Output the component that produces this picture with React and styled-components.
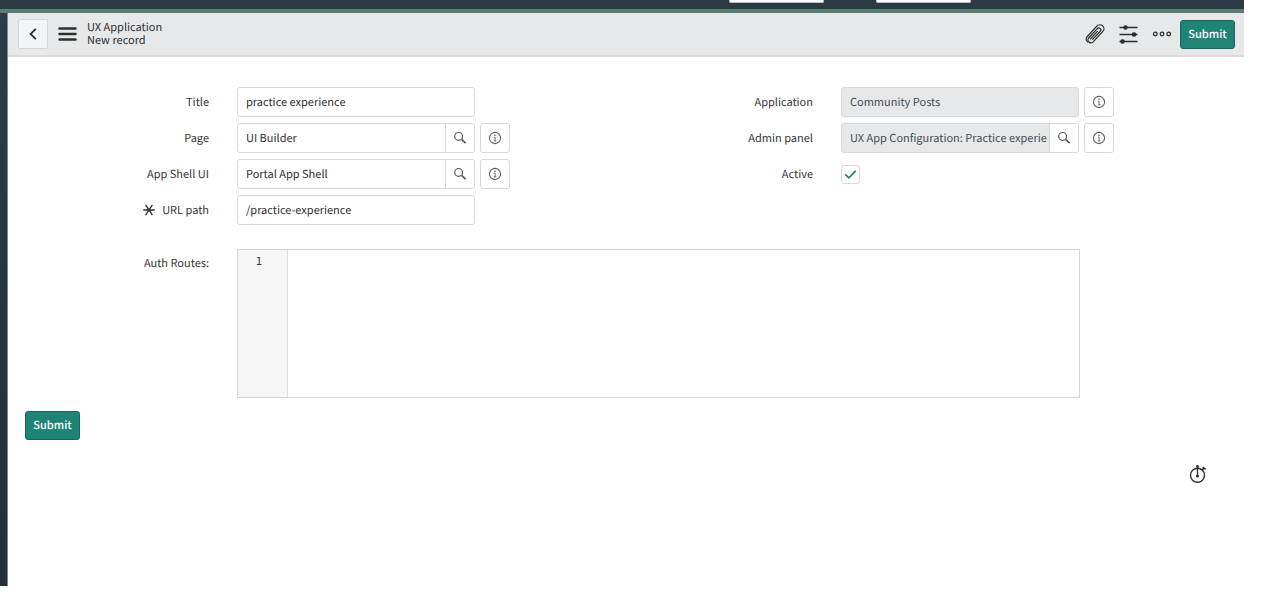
import React, { useState } from 'react';
import styled, { createGlobalStyle } from 'styled-components';

const GlobalStyle = createGlobalStyle`
  * {
    box-sizing: border-box;
  }
  body {
    margin: 0;
    background: #fff;
    color: #343434;
    text-rendering: geometricPrecision;
  }
  body, button, input, textarea {
    font-family: 'Noto Sans CJK SC', 'Noto Sans', sans-serif;
    font-size: 11px;
    line-height: 13px;
  }
  button, input, textarea {
    text-rendering: inherit;
  }
`;

const Page = styled.div`
  display: flex;
  flex-direction: column;
  min-height: 100vh;
  padding: 0 28px 28px 0;
`;

const TopBar = styled.div`
  display: flex;
  justify-content: flex-end;
  gap: 52px;
  height: 13px;
  padding-right: 273px;
  background: #2b3b43;
  border-bottom: 4px solid #5a7f70;
`;

const TopBox = styled.div`
  width: 95px;
  height: 3px;
  background: #fff;
  border: 1px solid #bcc5ca;
  border-top: none;
  border-radius: 0 0 2px 2px;
`;

const Body = styled.div`
  display: flex;
  flex: 1;
`;

const Rail = styled.div`
  width: 8px;
  background: linear-gradient(#2b3d46, #222f35);
  border-right: 1px solid #7d888c;
`;

const Main = styled.main`
  flex: 1;
  min-width: 0;
`;

const Header = styled.header`
  display: flex;
  align-items: center;
  height: 44px;
  padding: 0 9px 0 10px;
  background: #e6e8ea;
  border-bottom: 2px solid #d9dadb;
`;

const BackButton = styled.button`
  display: flex;
  align-items: center;
  justify-content: center;
  width: 30px;
  height: 30px;
  padding: 0;
  background: #f3f4f5;
  border: 1px solid #d3d6d9;
  border-radius: 2px;
`;

const IconButton = styled.button`
  display: flex;
  align-items: center;
  justify-content: center;
  padding: 0;
  background: none;
  border: none;
  color: #2e2e2e;
`;

const MenuButton = styled(IconButton)`
  margin: 0 10px;
`;

const Heading = styled.h1`
  margin: 0;
  font-size: 11px;
  font-weight: 400;
  color: #2e2e2e;
`;

const Subtitle = styled.span`
  display: block;
`;

const Actions = styled.div`
  display: flex;
  align-items: center;
  gap: 8px;
  margin-left: auto;
`;

const Tools = styled.div`
  display: flex;
  align-items: center;
  gap: 14px;
`;

const SubmitButton = styled.button`
  width: 55px;
  height: 29px;
  padding: 0;
  background: #1f8476;
  border: 1px solid #1a665c;
  border-radius: 3px;
  color: #fff;
  font-weight: 500;
`;

const Form = styled.form`
  padding: 30px 14px 0;
`;

const Columns = styled.div`
  display: grid;
  grid-template-columns: 1fr 1fr;
`;

const Column = styled.div`
  display: flex;
  flex-direction: column;
  gap: 6px;
`;

const Row = styled.div`
  display: grid;
  grid-template-columns: 215fr 238fr 151fr;
  align-items: center;
  height: 30px;
`;

const ScriptRow = styled.div`
  display: grid;
  grid-template-columns: 215fr 843fr 150fr;
  margin-top: 24px;
`;

const Label = styled.label`
  display: flex;
  align-items: center;
  justify-content: flex-end;
  gap: 7px;
  padding-right: 28px;
`;

const ScriptLabel = styled(Label)`
  align-self: start;
  padding-top: 8px;
`;

const Control = styled.div`
  display: flex;
  height: 30px;
  background: ${(props) => (props.$readOnly ? '#e6e8ea' : '#fff')};
  border: 1px solid #d6d8da;
  border-radius: 3px;
  overflow: hidden;
`;

const Input = styled.input`
  flex: 1;
  min-width: 0;
  padding: 0 0 0 8px;
  background: none;
  border: none;
  outline: none;
  color: ${(props) => (props.readOnly ? '#464c52' : '#2e2e2e')};
`;

const LookupButton = styled(IconButton)`
  width: 29px;
  background: #fff;
  border-left: 1px solid #d6d8da;
  color: #50555a;
`;

const InfoButton = styled(IconButton)`
  width: 30px;
  height: 30px;
  margin-left: 5px;
  background: #fff;
  border: 1px solid #d6d8da;
  border-radius: 3px;
  color: #5c6064;
`;

const CheckWrap = styled.span`
  position: relative;
  display: flex;
  width: 19px;
  height: 19px;

  svg {
    position: absolute;
    top: 3px;
    left: 3px;
    pointer-events: none;
  }
`;

const Checkbox = styled.input`
  appearance: none;
  width: 19px;
  height: 19px;
  margin: 0;
  background: #fff;
  border: 1px solid #d6d8da;
  border-radius: 3px;
`;

const Editor = styled.div`
  display: flex;
  height: 149px;
  border: 1px solid #d5d5d5;
`;

const Gutter = styled.div`
  width: 50px;
  padding: 5px 25px 0 0;
  background: #f6f6f6;
  border-right: 1px solid #dedede;
  color: #3c3c3c;
  font-family: 'DejaVu Sans Mono', monospace;
  text-align: right;
`;

const Code = styled.textarea`
  flex: 1;
  padding: 5px;
  border: none;
  outline: none;
  resize: none;
  font-family: 'DejaVu Sans Mono', monospace;
`;

const FormFooter = styled.div`
  padding: 13px 3px 0;
`;

const Timing = styled.div`
  display: flex;
  justify-content: flex-end;
  padding: 24px 37px 0 0;
`;

const SearchIcon = () => (
  <svg width="14" height="14" viewBox="0 0 14 14" fill="none" stroke="currentColor">
    <circle cx="5.6" cy="5.4" r="3.9" strokeWidth="1.2" />
    <path d="M8.6 8.4L12.6 12.2" strokeWidth="1.6" />
  </svg>
);

const InfoIcon = () => (
  <svg width="14" height="14" viewBox="0 0 14 14" fill="none" stroke="currentColor">
    <circle cx="7" cy="7" r="5.6" strokeWidth="1.1" />
    <path d="M6 6.2H7.1V10M5.9 9.9H8.3" strokeWidth="0.9" />
    <circle cx="7" cy="4.2" r="0.8" fill="currentColor" stroke="none" />
  </svg>
);

const PaperclipIcon = () => (
  <svg width="20" height="20" viewBox="0 0 20 20" fill="none" stroke="currentColor" strokeWidth="1.2" strokeLinecap="round">
    <g transform="rotate(43 10 10)">
      <path d="M6 15.5V2.8A4 4 0 0 1 14 2.8V17A3 3 0 0 1 8 17V4.4A2 2 0 0 1 12 4.4V15.5" />
      <path d="M6 15.5V17A4 4 0 0 0 10 20.8" />
      <path d="M10 6.5V16.5" />
    </g>
  </svg>
);

const SlidersIcon = () => (
  <svg width="19" height="20" viewBox="0 0 19 20" fill="currentColor" stroke="currentColor">
    <path d="M0.5 3.5H18.5M0.5 10.5H18.5M0.5 17.5H18.5" strokeWidth="1.5" />
    <circle cx="6.5" cy="3.5" r="2.2" stroke="none" />
    <circle cx="15" cy="10.5" r="2.3" stroke="none" />
    <circle cx="3.5" cy="17.5" r="2.3" stroke="none" />
  </svg>
);

const MoreIcon = () => (
  <svg width="20" height="8" viewBox="0 0 20 8" fill="none" stroke="currentColor" strokeWidth="1.3">
    <circle cx="3.3" cy="4" r="1.8" />
    <circle cx="10" cy="4" r="1.8" />
    <circle cx="16.7" cy="4" r="1.8" />
  </svg>
);

const StopwatchIcon = () => (
  <svg width="18" height="20" viewBox="0 0 18 20" fill="none" stroke="currentColor">
    <circle cx="8.5" cy="11.3" r="7" strokeWidth="1.4" />
    <path d="M8.5 1.5V12" strokeWidth="1.3" />
    <circle cx="8.5" cy="2.4" r="1.4" fill="currentColor" stroke="none" />
    <circle cx="8.5" cy="12" r="1.6" fill="currentColor" stroke="none" />
    <path d="M13.2 5.8L15 4.2M13.6 3L16.6 5.4" strokeWidth="1.6" />
  </svg>
);

const RequiredIcon = () => (
  <svg width="12" height="12" viewBox="0 0 12 12" stroke="#2e2e2e" strokeWidth="1.3">
    <path d="M0.3 6H11.7M2.6 0.8L9.4 11.2M9.4 0.8L2.6 11.2" />
  </svg>
);

const Field = ({ id, label, value, required, lookup, info, readOnly }) => {
  const [text, setText] = useState(value);

  return (
    <Row>
      <Label htmlFor={id}>
        {required && <RequiredIcon />}
        {label}
      </Label>
      <Control $readOnly={readOnly}>
        <Input
          id={id}
          type="text"
          value={text}
          readOnly={readOnly}
          required={required}
          onChange={(e) => setText(e.target.value)}
        />
        {lookup && (
          <LookupButton type="button" aria-label={`Look up ${label}`}>
            <SearchIcon />
          </LookupButton>
        )}
      </Control>
      {info && (
        <InfoButton type="button" aria-label={`Preview ${label}`}>
          <InfoIcon />
        </InfoButton>
      )}
    </Row>
  );
};

const App = () => {
  const [active, setActive] = useState(true);
  const [routes, setRoutes] = useState('');

  const handleSubmit = (event) => {
    event.preventDefault();
  };

  return (
    <Page>
      <GlobalStyle />
      <TopBar>
        <TopBox />
        <TopBox />
      </TopBar>
      <Body>
        <Rail />
        <Main>
          <Header>
            <BackButton type="button" aria-label="Back">
              <svg width="10" height="14" viewBox="0 0 10 14" fill="none" stroke="#2e2e2e" strokeWidth="1.8">
                <path d="M7.8 1.8L2.6 7L7.8 12.2" />
              </svg>
            </BackButton>
            <MenuButton type="button" aria-label="Menu">
              <svg width="19" height="16" viewBox="0 0 19 16" stroke="currentColor" strokeWidth="2.4" strokeLinecap="round">
                <path d="M1.5 2.5H17.5M1.5 8H17.5M1.5 13.5H17.5" />
              </svg>
            </MenuButton>
            <Heading>
              UX Application
              <Subtitle>New record</Subtitle>
            </Heading>
            <Actions>
              <Tools>
                <IconButton type="button" aria-label="Attachments">
                  <PaperclipIcon />
                </IconButton>
                <IconButton type="button" aria-label="Personalize form">
                  <SlidersIcon />
                </IconButton>
                <IconButton type="button" aria-label="More options">
                  <MoreIcon />
                </IconButton>
              </Tools>
              <SubmitButton type="submit" form="record">Submit</SubmitButton>
            </Actions>
          </Header>
          <Form id="record" onSubmit={handleSubmit}>
            <Columns>
              <Column>
                <Field id="title" label="Title" value="practice experience" />
                <Field id="page" label="Page" value="UI Builder" lookup info />
                <Field id="shell" label="App Shell UI" value="Portal App Shell" lookup info />
                <Field id="path" label="URL path" value="/practice-experience" required />
              </Column>
              <Column>
                <Field id="application" label="Application" value="Community Posts" readOnly info />
                <Field
                  id="panel"
                  label="Admin panel"
                  value="UX App Configuration: Practice experie"
                  readOnly
                  lookup
                  info
                />
                <Row>
                  <Label htmlFor="active">Active</Label>
                  <CheckWrap>
                    <Checkbox
                      id="active"
                      type="checkbox"
                      checked={active}
                      onChange={(e) => setActive(e.target.checked)}
                    />
                    {active && (
                      <svg width="13" height="13" viewBox="0 0 13 13" fill="none" stroke="#1f8476" strokeWidth="1.8">
                        <path d="M1.2 6.4L4.8 9.8L11.8 2.8" />
                      </svg>
                    )}
                  </CheckWrap>
                </Row>
              </Column>
            </Columns>
            <ScriptRow>
              <ScriptLabel htmlFor="routes">Auth Routes:</ScriptLabel>
              <Editor>
                <Gutter>1</Gutter>
                <Code id="routes" value={routes} onChange={(e) => setRoutes(e.target.value)} />
              </Editor>
            </ScriptRow>
            <FormFooter>
              <SubmitButton type="submit">Submit</SubmitButton>
            </FormFooter>
          </Form>
          <Timing>
            <IconButton type="button" aria-label="Response time">
              <StopwatchIcon />
            </IconButton>
          </Timing>
        </Main>
      </Body>
    </Page>
  );
};

export default App;
